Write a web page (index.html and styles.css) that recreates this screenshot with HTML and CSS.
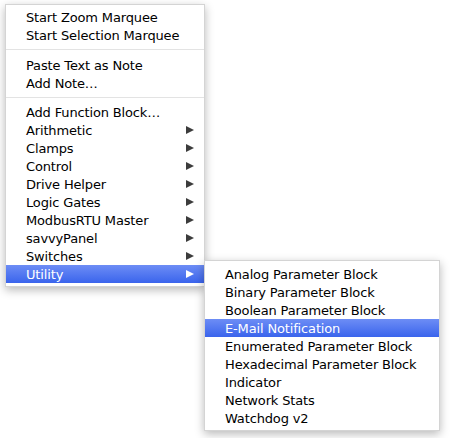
FILE: index.html
```html
<!DOCTYPE html>
<html>
<head>
<meta charset="utf-8">
<link rel="stylesheet" href="styles.css">
</head>
<body>
<div class="menu main">
  <div class="item">Start Zoom Marquee</div>
  <div class="item">Start Selection Marquee</div>
  <div class="sep"></div>
  <div class="item">Paste Text as Note</div>
  <div class="item">Add Note…</div>
  <div class="sep"></div>
  <div class="item">Add Function Block…</div>
  <div class="item sub">Arithmetic<span class="arrow"></span></div>
  <div class="item sub">Clamps<span class="arrow"></span></div>
  <div class="item sub">Control<span class="arrow"></span></div>
  <div class="item sub">Drive Helper<span class="arrow"></span></div>
  <div class="item sub">Logic Gates<span class="arrow"></span></div>
  <div class="item sub">ModbusRTU Master<span class="arrow"></span></div>
  <div class="item sub">savvyPanel<span class="arrow"></span></div>
  <div class="item sub">Switches<span class="arrow"></span></div>
  <div class="item sub active">Utility<span class="arrow"></span></div>
</div>
<div class="menu submenu">
  <div class="item">Analog Parameter Block</div>
  <div class="item">Binary Parameter Block</div>
  <div class="item">Boolean Parameter Block</div>
  <div class="item active">E-Mail Notification</div>
  <div class="item">Enumerated Parameter Block</div>
  <div class="item">Hexadecimal Parameter Block</div>
  <div class="item">Indicator</div>
  <div class="item">Network Stats</div>
  <div class="item">Watchdog v2</div>
</div>
</body>
</html>
```
FILE: styles.css
```css
html, body {
  margin: 0;
  padding: 0;
  background: #ffffff;
}
body {
  position: relative;
  width: 450px;
  height: 438px;
  overflow: hidden;
  font-family: "DejaVu Sans", sans-serif;
  font-size: 13px;
  letter-spacing: -0.15px;
  color: #000;
}
.menu {
  box-sizing: border-box;
  background: #ffffff;
  border: 1px solid #d4d4d4;
  box-shadow: 0 3px 9px rgba(0, 0, 0, 0.28);
  padding: 3px 0 3px 0;
  display: flex;
  flex-direction: column;
}
.main {
  margin: 4px 0 0 5px;
  width: 200px;
  height: 283px;
}
.submenu {
  position: absolute;
  left: 204px;
  top: 260px;
  width: 236px;
  height: 171px;
  padding-top: 4px;
}
.item {
  box-sizing: border-box;
  height: 18px;
  line-height: 16px;
  padding: 2px 10px 0 20px;
  display: flex;
  align-items: center;
  justify-content: space-between;
  white-space: nowrap;
}
.sep {
  height: 12px;
  display: flex;
  align-items: center;
}
.sep::before {
  content: "";
  display: block;
  width: 100%;
  height: 1px;
  background: #e3e3e3;
}
.arrow {
  width: 0;
  height: 0;
  margin-top: -2px;
  border-left: 8px solid #3c3c3c;
  border-top: 4.5px solid transparent;
  border-bottom: 4.5px solid transparent;
}
.active {
  background: linear-gradient(#6d8df5, #3a64ec);
  color: #ffffff;
}
.active .arrow {
  border-left-color: #ffffff;
}
```
